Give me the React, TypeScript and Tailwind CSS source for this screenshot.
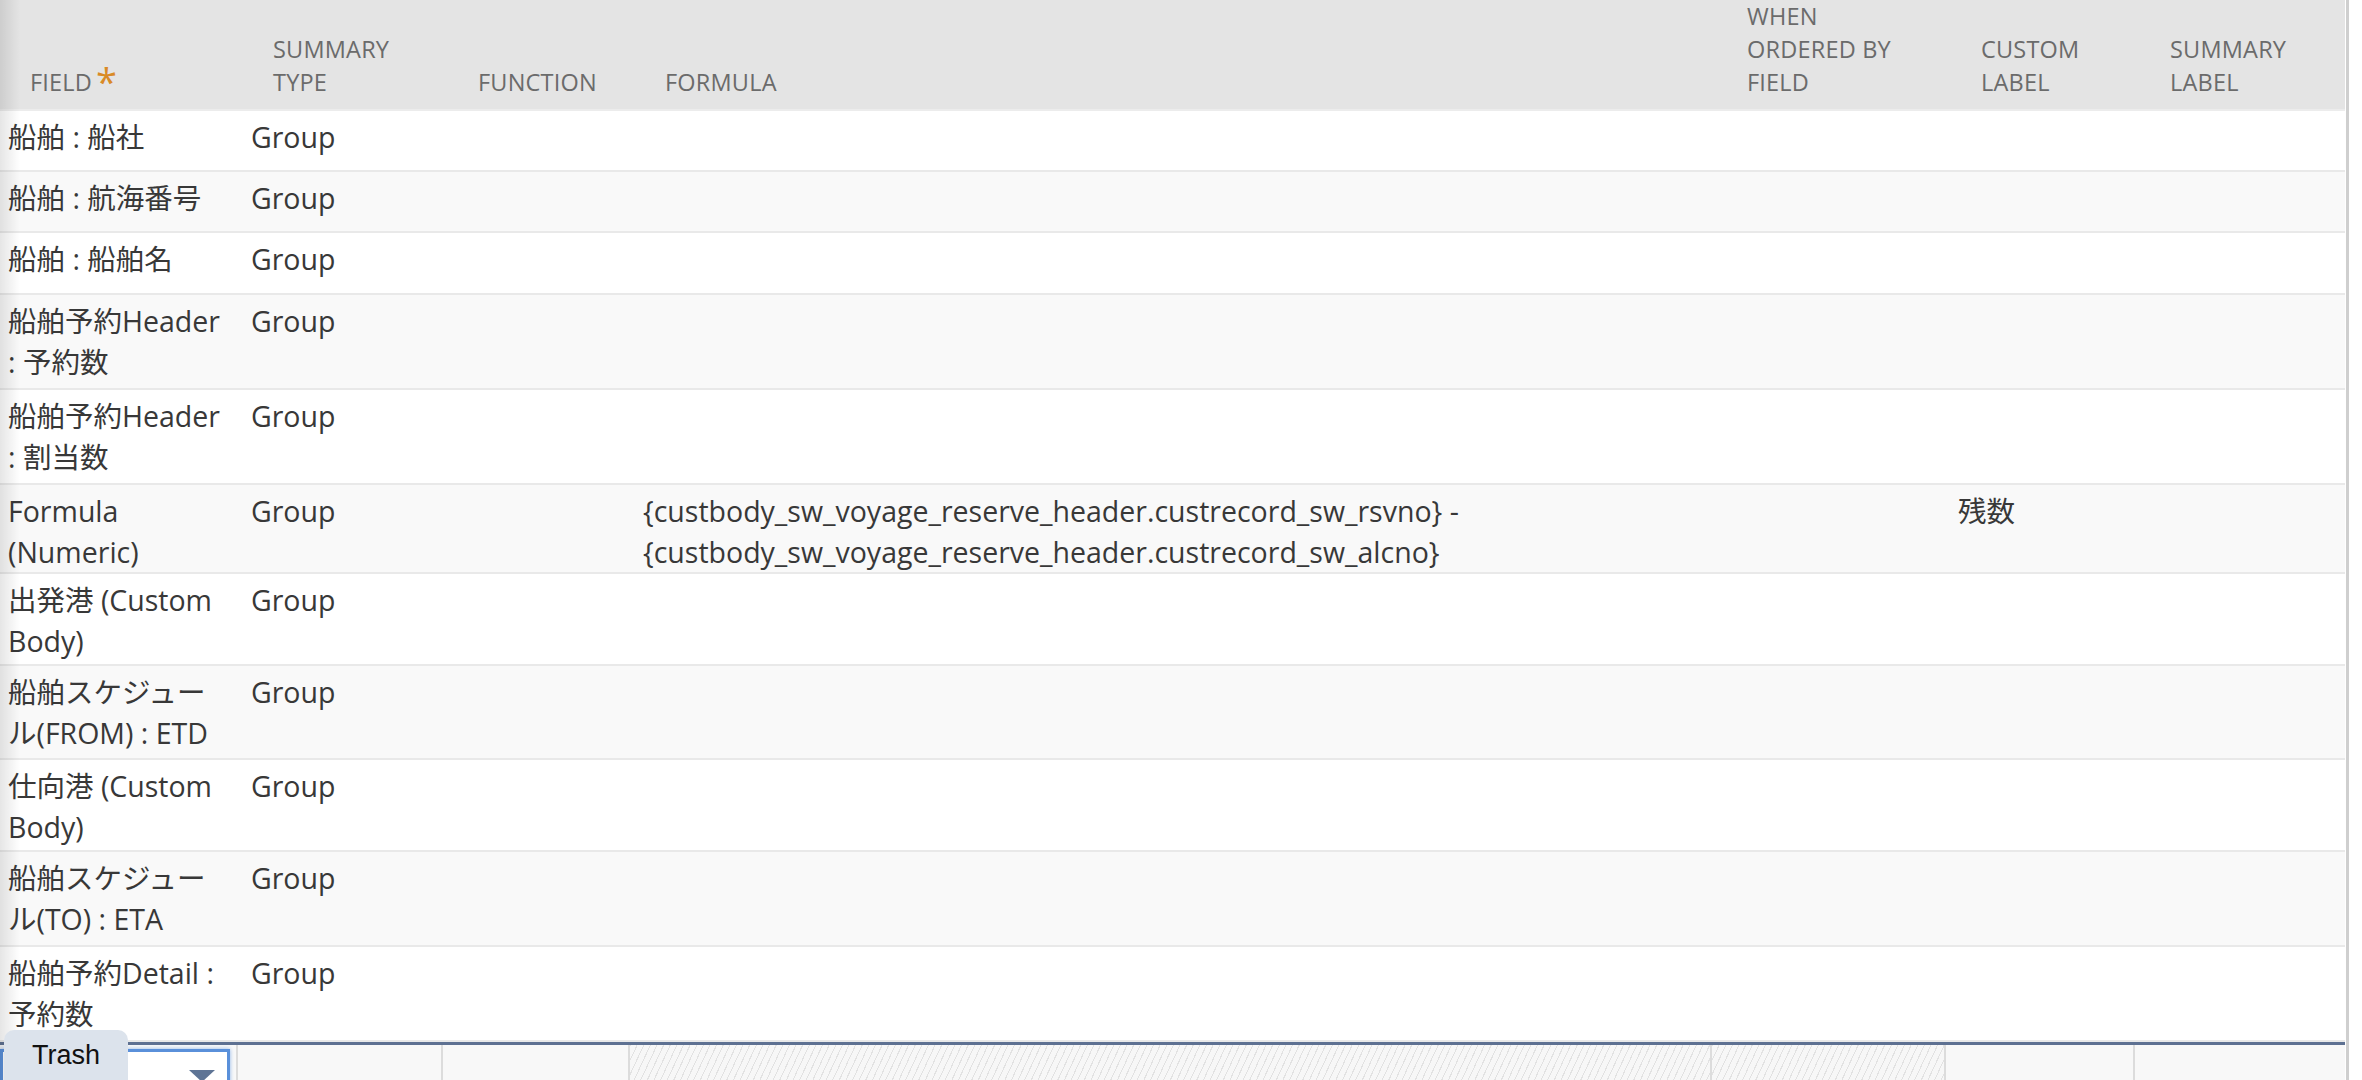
import React from "react";

const colW = [
  "w-[243px]",
  "w-[205px]",
  "w-[187px]",
  "w-[1082px]",
  "w-[234px]",
  "w-[189px]",
  "w-[210px]",
];

type Row = {
  h: string;
  field: string[];
  formula?: string[];
  custom?: string;
};

const rows: Row[] = [
  { h: "h-[61px]", field: ["船舶 : 船社"] },
  { h: "h-[61px]", field: ["船舶 : 航海番号"] },
  { h: "h-[62px]", field: ["船舶 : 船舶名"] },
  { h: "h-[95px]", field: ["船舶予約Header", ": 予約数"] },
  { h: "h-[95px]", field: ["船舶予約Header", ": 割当数"] },
  {
    h: "h-[89px]",
    field: ["Formula", "(Numeric)"],
    formula: [
      "{custbody_sw_voyage_reserve_header.custrecord_sw_rsvno} -",
      "{custbody_sw_voyage_reserve_header.custrecord_sw_alcno}",
    ],
    custom: "残数",
  },
  { h: "h-[92px]", field: ["出発港 (Custom", "Body)"] },
  { h: "h-[94px]", field: ["船舶スケジュー", "ル(FROM) : ETD"] },
  { h: "h-[92px]", field: ["仕向港 (Custom", "Body)"] },
  { h: "h-[95px]", field: ["船舶スケジュー", "ル(TO) : ETA"] },
  { h: "h-[95px]", field: ["船舶予約Detail :", "予約数"] },
];

const headers: string[][] = [
  ["FIELD"],
  ["SUMMARY", "TYPE"],
  ["FUNCTION"],
  ["FORMULA"],
  ["WHEN", "ORDERED BY", "FIELD"],
  ["CUSTOM", "LABEL"],
  ["SUMMARY", "LABEL"],
];

function Lines({ lines }: { lines: string[] }) {
  return (
    <>
      {lines.map((l, i) => (
        <div key={i} className="whitespace-nowrap">
          {l}
        </div>
      ))}
    </>
  );
}

const hatch =
  "bg-[repeating-linear-gradient(115deg,#e2e2e2_0px,#e2e2e2_1px,#f7f7f7_1px,#f7f7f7_6px)]";

export default function App() {
  return (
    <div className="relative w-[2362px] h-[1080px] overflow-hidden bg-white flex font-['Open_Sans','Noto_Sans_CJK_JP',sans-serif]">
      <div className="relative w-[2346px] h-full overflow-hidden">
        <div className="ml-[-5px] w-[2350px] flex flex-col">
          {/* header */}
          <div className="flex h-[111px] bg-[#e4e4e4] border-b-2 border-[#ececec] box-border">
            {headers.map((h, i) => (
              <div
                key={i}
                className={`${colW[i]} flex flex-col justify-end pl-[35px] pb-[10px] text-[23.5px] leading-[33px] tracking-[0.2px] text-[#6b6b6b] uppercase`}
              >
                {i === 0 ? (
                  <div className="whitespace-nowrap">
                    FIELD
                    <span className="relative top-[5px] ml-[4px] text-[38px] leading-none text-[#d98a26]">
                      *
                    </span>
                  </div>
                ) : (
                  <Lines lines={h} />
                )}
              </div>
            ))}
          </div>
          {/* rows */}
          {rows.map((r, ri) => (
            <div
              key={ri}
              className={`${r.h} flex box-border border-b-2 border-[#e9e9e9] text-[28.5px] leading-[41px] text-[#383838] ${
                ri % 2 === 0 ? "bg-white" : "bg-[#f9f9f9]"
              }`}
            >
              <div className={`${colW[0]} pl-[13px] pt-[6px]`}>
                <Lines lines={r.field} />
              </div>
              <div className={`${colW[1]} pl-[13px] pt-[6px]`}>Group</div>
              <div className={`${colW[2]} pl-[13px] pt-[6px]`} />
              <div className={`${colW[3]} pl-[13px] pt-[6px]`}>
                {r.formula && <Lines lines={r.formula} />}
              </div>
              <div className={`${colW[4]} pl-[13px] pt-[6px]`} />
              <div className={`${colW[5]} pl-[12px] pt-[6px]`}>{r.custom}</div>
              <div className={`${colW[6]} pl-[13px] pt-[6px]`} />
            </div>
          ))}
          {/* new row */}
          <div className="flex h-[60px] border-t-[3px] border-[#5e7192] bg-[#f8f8f8]">
            <div className={`${colW[0]} border-r-2 border-[#dcdcdc] pl-[5px] pt-[4px]`}>
              <div className="relative h-[60px] w-[230px] bg-white border-[3px] border-[#5a90da] shadow-[0_0_4px_#8fb5ea]">
                <div className="absolute left-[186px] top-[18px] w-0 h-0 border-l-[13px] border-r-[13px] border-t-[12px] border-l-transparent border-r-transparent border-t-[#5e7495]" />
              </div>
            </div>
            <div className={`${colW[1]} border-r-2 border-[#dcdcdc]`} />
            <div className={`${colW[2]} border-r-2 border-[#dcdcdc]`} />
            <div className={`${colW[3]} border-r-2 border-[#dcdcdc] ${hatch}`} />
            <div className={`${colW[4]} border-r-2 border-[#dcdcdc] ${hatch}`} />
            <div className={`${colW[5]} border-r-2 border-[#dcdcdc]`} />
            <div className={colW[6]} />
          </div>
        </div>
        {/* left scroll shadow */}
        <div className="absolute left-0 top-0 h-full w-[20px] bg-gradient-to-r from-black/10 to-transparent pointer-events-none" />
        {/* trash tooltip */}
        <div className="absolute left-[4px] top-[1030px] h-[60px] w-[124px] rounded-[10px] bg-[#dce3ec] pl-[28px] pt-[8px] text-[27px] leading-[34px] text-[#111] font-['Liberation_Sans',Arial,sans-serif]">
          Trash
        </div>
      </div>
      <div className="w-[3px] h-full bg-[#cfcfcf]" />
      <div className="flex-1 bg-white" />
    </div>
  );
}
